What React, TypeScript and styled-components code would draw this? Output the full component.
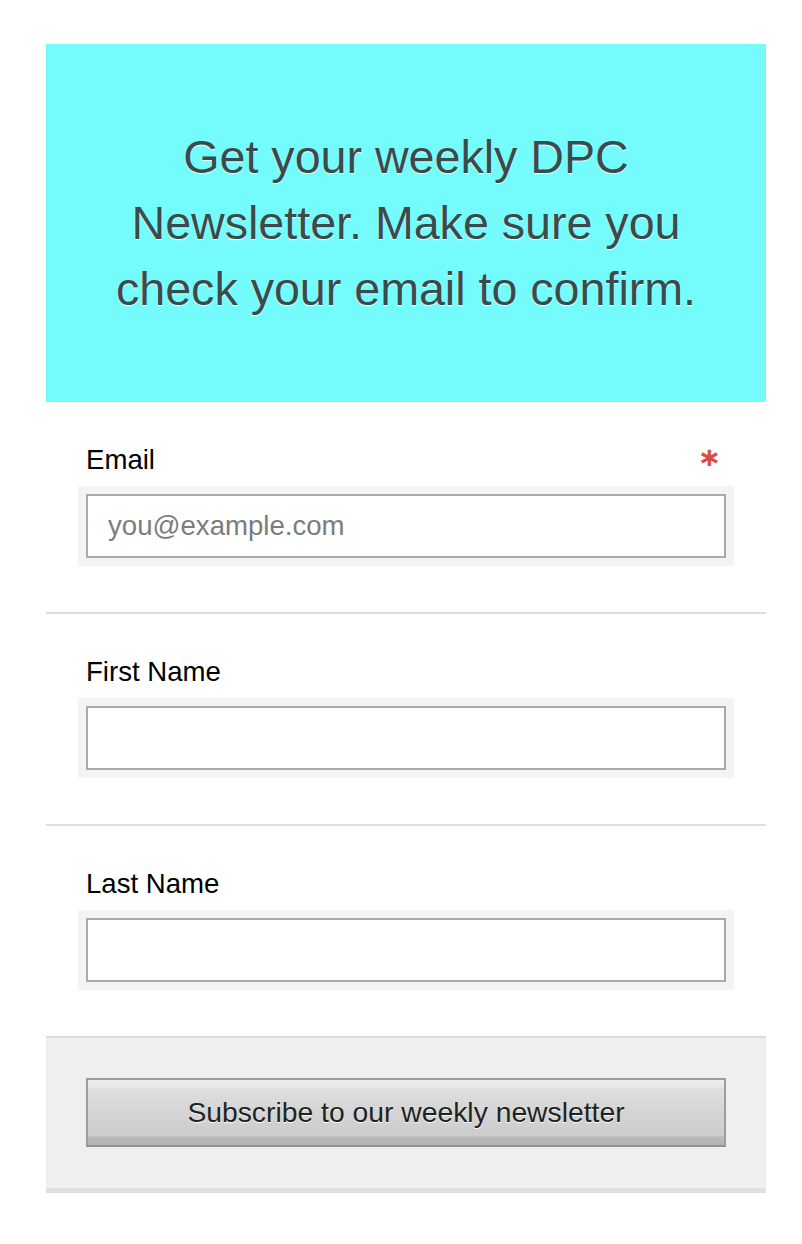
import React from 'react'
import styled, { createGlobalStyle } from 'styled-components'

const GlobalStyle = createGlobalStyle`
  html, body {
    margin: 0;
    padding: 0;
    background: #ffffff;
  }
  body {
    font-family: 'Liberation Sans', Arial, Helvetica, sans-serif;
  }
  * {
    box-sizing: border-box;
  }
`

const Page = styled.div`
  padding: 44px 36px 50px 46px;
`

const Form = styled.form`
  width: 720px;
  display: flex;
  flex-direction: column;
`

const Header = styled.div`
  height: 358px;
  background: #74fcfd;
  display: flex;
  align-items: center;
  justify-content: center;
  padding: 0 40px;
`

const HeaderText = styled.p`
  margin: 0;
  font-size: 46.6px;
  line-height: 66px;
  text-align: center;
  color: #3b4a4a;
  text-shadow: 0 1px 1px rgba(255, 255, 255, 0.8);
`

const Field = styled.div`
  padding: 44px 32px 46px;
  border-bottom: 2px solid #dddddd;
  display: flex;
  flex-direction: column;
  gap: 12px;
`

const LabelRow = styled.div`
  display: flex;
  align-items: center;
  justify-content: space-between;
  padding: 0 16px 0 8px;
  height: 28px;
`

const Label = styled.label`
  font-size: 27.6px;
  color: #000;
`

const Required = styled.span`
  color: #d94a42;
  font-family: 'DejaVu Sans', sans-serif;
  font-size: 33px;
  font-weight: bold;
  line-height: 1;
  padding-top: 6px;
  -webkit-text-stroke: 0.6px #d94a42;
`

const InputWell = styled.div`
  background: #f4f4f4;
  padding: 8px;
`

const Input = styled.input`
  display: block;
  width: 100%;
  height: 64px;
  border: 2px solid #a9a9a9;
  background: #ffffff;
  padding: 0 20px;
  font-family: 'Liberation Sans', Arial, sans-serif;
  font-size: 27.6px;
  color: #333;
  outline: none;

  &::placeholder {
    color: #7c7c7c;
  }
`

const Footer = styled.div`
  background: #efefef;
  padding: 40px 40px 41px;
  border-bottom: 5px solid #e0e0e0;
`

const SubmitButton = styled.button`
  display: block;
  width: 100%;
  height: 69px;
  border: 2px solid #9c9c9c;
  border-bottom-color: #909090;
  background: linear-gradient(
    #ededed 0%,
    #e8e8e8 11%,
    #dedede 13%,
    #cccccc 86%,
    #bababa 88%,
    #b4b4b4 100%
  );
  font-family: 'Liberation Sans', Arial, sans-serif;
  font-size: 28.3px;
  color: #222;
  text-shadow: 0 1px 0 rgba(255, 255, 255, 0.9);
  cursor: pointer;
`

const fields = [
  { name: 'email', label: 'Email', required: true, placeholder: 'you@example.com', type: 'email' },
  { name: 'first', label: 'First Name', required: false, placeholder: '', type: 'text' },
  { name: 'last', label: 'Last Name', required: false, placeholder: '', type: 'text' },
]

const App = () => {
  return (
    <Page>
      <GlobalStyle />
      <Form onSubmit={e => e.preventDefault()}>
        <Header>
          <HeaderText>
            Get your weekly DPC Newsletter. Make sure you check your email to confirm.
          </HeaderText>
        </Header>
        {fields.map(f => (
          <Field key={f.name}>
            <LabelRow>
              <Label htmlFor={f.name}>{f.label}</Label>
              {f.required && <Required>*</Required>}
            </LabelRow>
            <InputWell>
              <Input id={f.name} type={f.type} placeholder={f.placeholder} />
            </InputWell>
          </Field>
        ))}
        <Footer>
          <SubmitButton type="submit">Subscribe to our weekly newsletter</SubmitButton>
        </Footer>
      </Form>
    </Page>
  )
}

export default App
